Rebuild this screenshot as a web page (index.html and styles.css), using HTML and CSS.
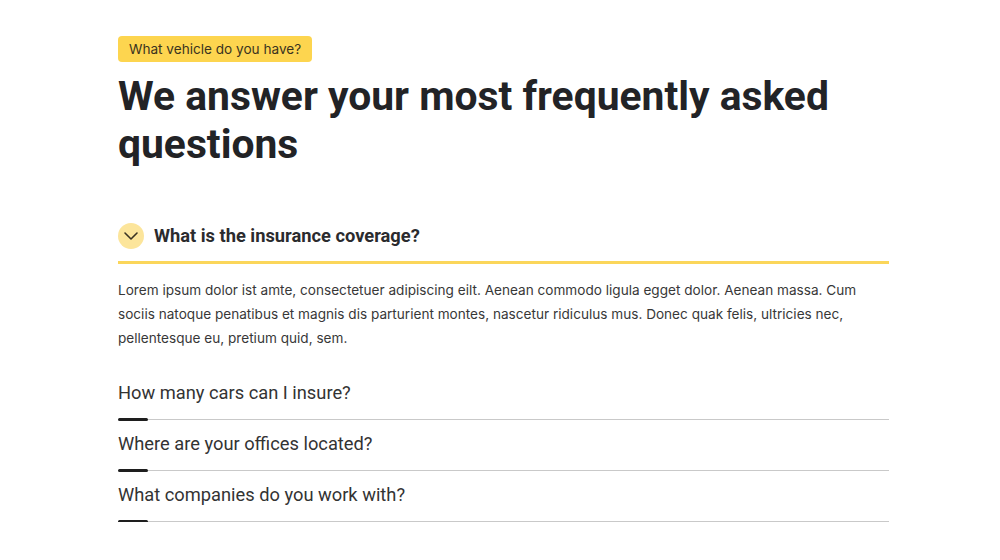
FILE: index.html
```html
<!DOCTYPE html>
<html lang="en">
<head>
<meta charset="utf-8">
<title>FAQ</title>
<link rel="stylesheet" href="styles.css">
</head>
<body>
<main class="faq">
  <span class="badge">What vehicle do you have?</span>
  <h1 class="title">We answer your most frequently asked questions</h1>
  <div class="list">
    <div class="item item-open">
      <div class="item-head">
        <span class="chev">
          <svg width="16" height="10" viewBox="0 0 16 10" aria-hidden="true"><path d="M2 2 L8 8 L14 2" fill="none" stroke="#3a3323" stroke-width="1.6" stroke-linecap="round" stroke-linejoin="round"/></svg>
        </span>
        <span class="head-text">What is the insurance coverage?</span>
      </div>
      <p class="answer">Lorem ipsum dolor ist amte, consectetuer adipiscing eilt. Aenean commodo ligula egget dolor. Aenean massa. Cum sociis natoque penatibus et magnis dis parturient montes, nascetur ridiculus mus. Donec quak felis, ultricies nec, pellentesque eu, pretium quid, sem.</p>
    </div>
    <div class="item">How many cars can I insure?</div>
    <div class="item">Where are your offices located?</div>
    <div class="item">What companies do you work with?</div>
  </div>
</main>
</body>
</html>
```

FILE: styles.css
```css
* { box-sizing: border-box; }
html, body { margin: 0; padding: 0; background: #fff; }
body { font-family: Roboto, "Liberation Sans", sans-serif; color: #222; }

.faq {
  width: 771px;
  margin-left: 118px;
  padding-top: 36px;
  display: flex;
  flex-direction: column;
  align-items: flex-start;
}

.badge {
  display: inline-block;
  background: #fdd54f;
  color: #3a3320;
  font-family: Inter, "Noto Sans", sans-serif;
  font-size: 13.6px;
  line-height: 26px;
  height: 26px;
  padding: 0 11px;
  border-radius: 4px;
}

.title {
  margin: 10px 0 0 0;
  font-family: Roboto, sans-serif;
  font-weight: 700;
  font-size: 40.8px;
  line-height: 48px;
  color: #222326;
  letter-spacing: 0;
}

.list { width: 100%; margin-top: 55px; }

.item-head {
  display: flex;
  align-items: center;
  gap: 10px;
  padding-bottom: 12px;
  border-bottom: 3px solid #fbd65a;
}

.chev {
  width: 26px;
  height: 26px;
  border-radius: 50%;
  background: #fce59b;
  display: flex;
  align-items: center;
  justify-content: center;
}

.head-text {
  font-family: Roboto, sans-serif;
  font-weight: 700;
  font-size: 18.3px;
  line-height: 26px;
  color: #2b2b2e;
}

.answer {
  margin: 14px 0 19px 0;
  font-family: Inter, "Noto Sans", sans-serif;
  font-size: 13.6px;
  line-height: 24px;
  color: #383838;
}

.item:not(.item-open) {
  position: relative;
  padding: 12px 0 14px 0;
  border-bottom: 1px solid #c9c9c9;
  font-family: Roboto, sans-serif;
  font-size: 18.3px;
  line-height: 24px;
  color: #333;
}

.item:not(.item-open)::after {
  content: "";
  position: absolute;
  left: 0;
  bottom: -2px;
  width: 30px;
  height: 3px;
  background: #1e1e1e;
  border-radius: 2px;
}
```
